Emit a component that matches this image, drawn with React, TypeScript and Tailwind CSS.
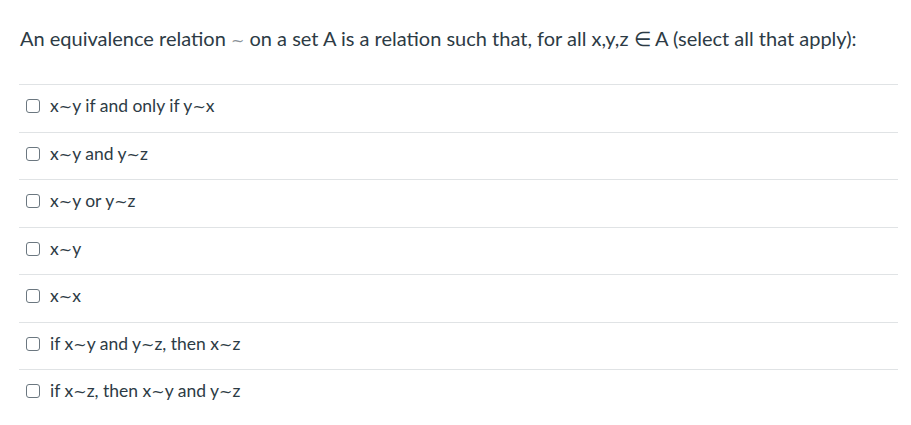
import React from 'react';

const options = [
  'x~y if and only if y~x',
  'x~y and y~z',
  'x~y or y~z',
  'x~y',
  'x~x',
  'if x~y and y~z, then x~z',
  'if x~z, then x~y and y~z',
];

// Lato's own tilde is tiny; the reference shows a wide, flat one
const withTilde = (s: string) =>
  s.split('~').flatMap((part, i) =>
    i === 0
      ? [part]
      : [
          <span key={i} className="font-['DejaVu_Sans',sans-serif] text-[16px] leading-none">
            ~
          </span>,
          part,
        ]
  );

const App: React.FC = () => {
  return (
    <div className="w-[911px] h-[425px] bg-white text-[#2d3b45] font-['Lato','Liberation_Sans',sans-serif]">
      <div className="pl-5 pr-3 pt-[25px]">
        <p className="text-[20px] leading-[26px] h-[59px]">
          An equivalence relation{' '}
          <span className="text-[#8a9298] font-['DejaVu_Sans',sans-serif] text-[16px] leading-none">~</span> on a set
          A is a relation such that, for all x,y,z ∈ A (select all that apply):
        </p>
        <div className="ml-[-1px] mr-[1px]">
          {options.map((opt) => (
            <label
              key={opt}
              className="flex items-center h-[47.5px] border-t border-[#e0e3e5] pl-[7px] gap-[10px] text-[17.5px]"
            >
              <span className="w-[14px] h-[14px] -mt-[4px] rounded-[3px] border-[1.5px] border-[#6b7780] bg-white shrink-0" />
              <span className="leading-6 -mt-[4px]">{withTilde(opt)}</span>
            </label>
          ))}
        </div>
      </div>
    </div>
  );
};

export default App;
